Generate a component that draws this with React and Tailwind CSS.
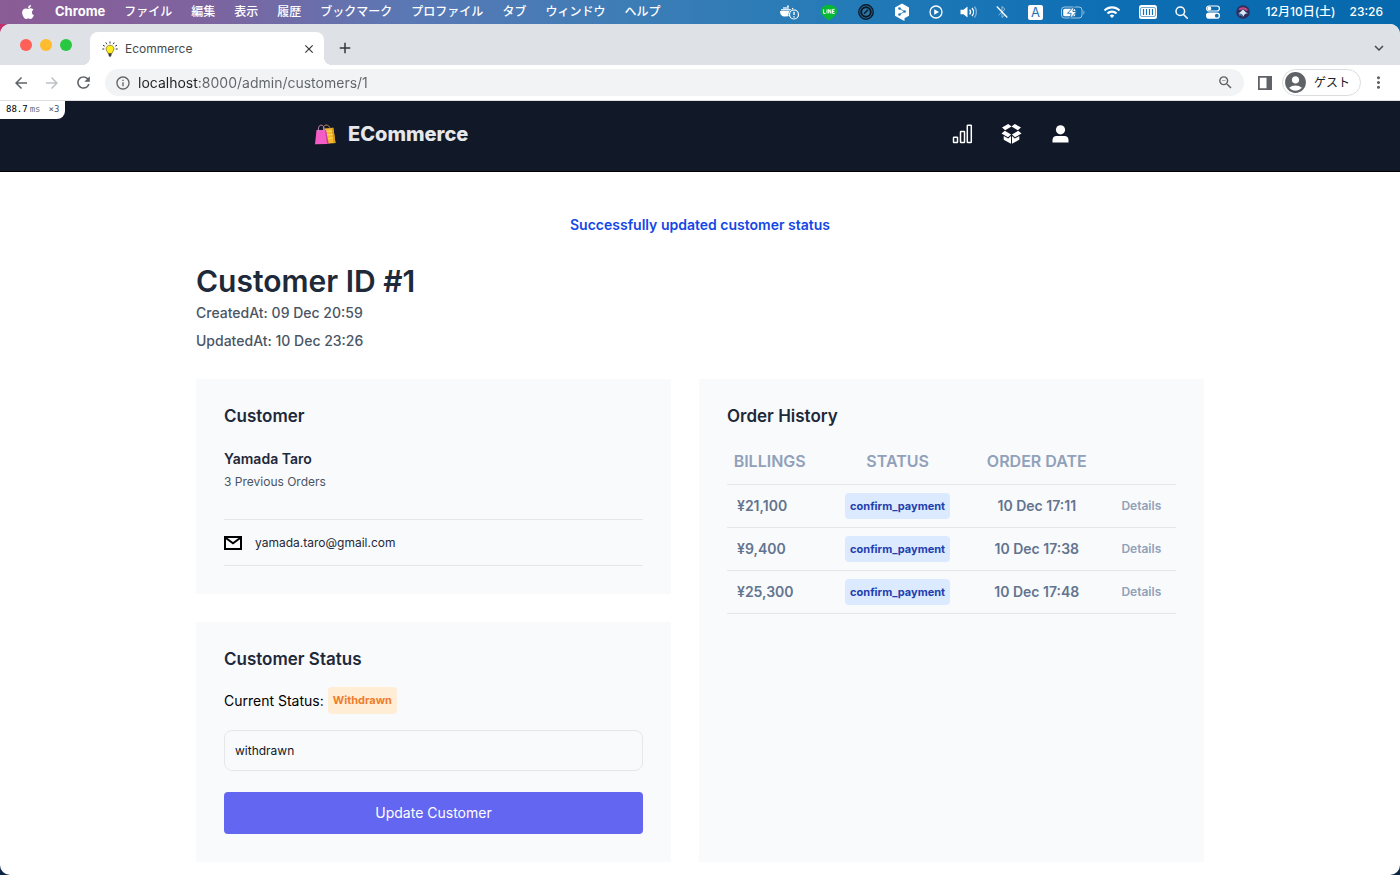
import { useState } from "react";
import { FaApple, FaDocker } from "react-icons/fa";
import {
  MdArrowBack, MdArrowForward, MdRefresh, MdInfoOutline, MdZoomOut,
  MdMoreVert, MdClose, MdAdd, MdKeyboardArrowDown, MdAccountCircle,
  MdWifi
} from "react-icons/md";

const MENUS = [
  "ファイル", "編集", "表示", "履歴", "ブックマーク",
  "プロファイル", "タブ", "ウィンドウ", "ヘルプ",
];

const ORDERS = [
  { id: 1, billing: "¥21,100", status: "confirm_payment", date: "10 Dec 17:11" },
  { id: 2, billing: "¥9,400",  status: "confirm_payment", date: "10 Dec 17:38" },
  { id: 3, billing: "¥25,300", status: "confirm_payment", date: "10 Dec 17:48" },
];

function DockerStatus() {
  return (
    <svg width="20" height="18" viewBox="0 0 20 18">
      <FaDocker x="0" y="0" width="16" height="16" color="#fff" />
      <circle cx="14" cy="11.5" r="5.6" fill="#2a7db8" />
      <circle cx="14" cy="11.5" r="4.5" fill="none" stroke="#fff" strokeWidth="1.2" />
      <path d="M14 8.8v3.2M14 13.2v1.2" stroke="#fff" strokeWidth="1.4" />
    </svg>
  );
}

function LineStatus() {
  return (
    <svg width="18" height="17" viewBox="0 0 18 17">
      <path d="M9 .8c4.6 0 8.3 2.9 8.3 6.6 0 2.7-3.2 5.4-8.3 9C3.9 12.800.7 10.100.7 7.400.7 3.700 4.400.8 9 .8z" fill="#06b833" />
      <path d="M3.600 5.400v4h1.900M7 5.400v4M8.700 9.400v-4l2.200 4v-4M14.600 5.400h-2v4h2M12.600 7.400h1.800" fill="none" stroke="#fff" strokeWidth="1" />
    </svg>
  );
}

function LensStatus() {
  return (
    <svg width="16" height="16" viewBox="0 0 16 16">
      <circle cx="8" cy="8" r="7.2" fill="none" stroke="#0c1a26" strokeWidth="1.4" />
      <circle cx="8" cy="8" r="4.8" fill="#2c76a8" stroke="#0c1a26" strokeWidth="2" />
      <path d="M6 9.800l4-4" stroke="#0c1a26" strokeWidth="1.6" />
    </svg>
  );
}

function HexStatus() {
  return (
    <svg width="16" height="18" viewBox="0 0 16 18">
      <path d="M8 .5l7 4v8.3l-4.5 2.5V18l-3-1.5L1 12.800V4.500z" fill="#fff" />
      <path d="M5.500 5.500l5 3-5 3" fill="none" stroke="#2478b5" strokeWidth=".8" />
      <circle cx="5.5" cy="5.5" r="1.3" fill="#2478b5" />
      <circle cx="10.6" cy="8.5" r="1.3" fill="#2478b5" />
      <circle cx="5.5" cy="11.5" r="1.3" fill="#2478b5" />
    </svg>
  );
}

function PlayStatus() {
  return (
    <svg width="14" height="14" viewBox="0 0 14 14">
      <circle cx="7" cy="7" r="6" fill="none" stroke="#fff" strokeWidth="1.3" />
      <path d="M5.200 4.200L10 7l-4.800 2.800z" fill="#fff" />
    </svg>
  );
}

function VolumeStatus() {
  return (
    <svg width="18" height="14" viewBox="0 0 18 14" fill="none">
      <path d="M.5 4.700h3L7.500 1.500v11L3.500 9.300h-3z" fill="#fff" />
      <path d="M9.700 4.600c1 1.400 1 3.400 0 4.800M12 3c2 2.300 2 5.700 0 8" stroke="#fff" strokeWidth="1.3" />
      <path d="M14.400 1.500c2.700 3.200 2.700 7.800 0 11" stroke="#fff" strokeOpacity=".45" strokeWidth="1.3" />
    </svg>
  );
}

function BluetoothOffStatus() {
  return (
    <svg width="12" height="14" viewBox="0 0 12 14" fill="none" stroke="#fff">
      <path d="M2.500 10.200L9 4.200 6 1.500v11l3-2.700-6.500-6" strokeOpacity=".5" />
      <path d="M.8 1.500l10.500 11" strokeWidth="1.3" />
    </svg>
  );
}

function BatteryStatus() {
  return (
    <svg width="25" height="13" viewBox="0 0 25 13">
      <rect x=".5" y="1" width="20.5" height="11" rx="3" fill="none" stroke="#fff" strokeOpacity=".6" />
      <path d="M22.500 4.500c1.200.3 1.200 3.700 0 4z" fill="#fff" opacity=".6" />
      <rect x="2.2" y="2.7" width="12" height="7.6" rx="1.5" fill="#fff" />
      <path d="M13.200 0L6.500 7.300h3.700L8.800 13l7-7.500h-3.900z" fill="#fff" stroke="#1a73b4" strokeWidth=".9" />
    </svg>
  );
}

function MemoryStatus() {
  return (
    <svg width="18" height="14" viewBox="0 0 18 14">
      <rect width="18" height="14" rx="2.5" fill="#fff" />
      <rect x="1.5" y="2.5" width="15" height="9" rx="1.5" fill="none" stroke="#1a73b4" strokeWidth=".6" />
      <path d="M4.500 4v6M7.500 4v6M10.500 4v6M13.500 4v6" stroke="#1a73b4" strokeWidth="1.2" />
    </svg>
  );
}

function SearchStatus() {
  return (
    <svg width="13" height="13" viewBox="0 0 13 13" fill="none" stroke="#fff" strokeWidth="1.5">
      <circle cx="5.3" cy="5.3" r="4.3" />
      <path d="M8.500 8.500l3.800 3.800" strokeLinecap="round" />
    </svg>
  );
}

function ControlCenterStatus() {
  return (
    <svg width="14" height="14" viewBox="0 0 14 14">
      <rect x=".6" y="1" width="12.8" height="5" rx="2.5" fill="none" stroke="#fff" strokeWidth="1.2" />
      <circle cx="3.4" cy="3.5" r="1.9" fill="#fff" />
      <rect y="7.6" width="14" height="6.2" rx="3.1" fill="#fff" />
      <circle cx="10.8" cy="10.7" r="1.9" fill="#1070b4" />
    </svg>
  );
}

function SiriStatus() {
  return (
    <svg width="14" height="14" viewBox="0 0 14 14">
      <circle cx="7" cy="7" r="6.8" fill="#2f2f5e" />
      <path d="M2.500 4.500C4 1.800 10 1.200 12 5.200c-1.500 1-3 .3-5-1.600-1.500 1.600-3 2-4.500.9z" fill="#c94a86" />
      <path d="M2 8.300c2-.6 3.600-2.300 5-4.100 1.400 1.800 3 3.500 5 4.100-2 .1-3.500.4-4.500 3.200-.7-2.300-3-3-5.500-3.200z" fill="#d9e8f6" />
      <path d="M3 10c1.500-.5 2.600-.5 3.800 1.500" stroke="#4fa5e8" fill="none" />
    </svg>
  );
}

function MenuBar() {
  return (
    <header className="flex h-6 items-center justify-between bg-linear-[90deg,#8b5c96_0%,#7d649f_15%,#5a78b4_29%,#3d7db6_45%,#247bb7_60%,#0d6eb4_80%,#0668ad_100%] pl-5 pr-[17px] text-white">
      <nav className="flex items-center gap-[19px] text-xs font-medium">
        <FaApple size={16} />
        <span className="text-[13px] font-bold">Chrome</span>
        {MENUS.map(m => <span key={m}>{m}</span>)}
      </nav>
      <div className="flex items-center *:flex *:justify-center">
        <span className="w-10"><DockerStatus /></span>
        <span className="w-[38px]"><LineStatus /></span>
        <span className="w-9"><LensStatus /></span>
        <span className="w-9"><HexStatus /></span>
        <span className="w-8"><PlayStatus /></span>
        <span className="w-[34px]"><VolumeStatus /></span>
        <span className="w-8"><BluetoothOffStatus /></span>
        <span className="w-9">
          <span className="h-[15px] w-[15px] rounded-xs bg-white text-center text-[13px] leading-[15px] text-[#1a73b4]">A</span>
        </span>
        <span className="w-10"><BatteryStatus /></span>
        <span className="w-9"><MdWifi size={18} /></span>
        <span className="w-9"><MemoryStatus /></span>
        <span className="w-8"><SearchStatus /></span>
        <span className="w-[30px]"><ControlCenterStatus /></span>
        <span className="w-[30px]"><SiriStatus /></span>
        <time className="gap-3.5 pl-2 text-xs font-medium">
          <span>12月10日(土)</span>
          <span>23:26</span>
        </time>
      </div>
    </header>
  );
}

function Bulb() {
  return (
    <svg width="16" height="16" viewBox="0 0 16 16">
      <path d="M8 4.200c2.300 0 3.900 1.600 3.900 3.600 0 1.900-1.500 2.900-1.900 4.700H6c-.4-1.800-1.900-2.800-1.900-4.700 0-2 1.600-3.600 3.900-3.600z" fill="#ffec1f" stroke="#6d6614" strokeWidth=".7" />
      <path d="M6.300 12.500h3.400l-.5 2.500-1.200 1-1.200-1z" fill="#3a3a3a" />
      <path d="M8 .5v2M3.800 1.500l1 1.700M12.200 1.500l-1 1.700M1 4.200l1.800 1M15 4.200l-1.800 1M.3 8h2M15.700 8h-2" stroke="#333" strokeWidth="1" />
    </svg>
  );
}

function TabStrip() {
  return (
    <div className="flex h-[41px] items-end bg-[#dee1e6] pl-5 pr-3">
      <div className="flex gap-2 self-start pt-[15px]">
        <button aria-label="Close window" className="h-3 w-3 rounded-full bg-[#fe5f57]" />
        <button aria-label="Minimize window" className="h-3 w-3 rounded-full bg-[#febc2e]" />
        <button aria-label="Zoom window" className="h-3 w-3 rounded-full bg-[#28c840]" />
      </div>
      <div className="relative ml-[18px] flex h-[33px] w-[234px] items-center rounded-t-lg bg-white pl-3 pr-2 before:absolute before:-left-2 before:bottom-0 before:h-2 before:w-2 before:bg-[radial-gradient(circle_at_0_0,transparent_8px,white_8px)] after:absolute after:-right-2 after:bottom-0 after:h-2 after:w-2 after:bg-[radial-gradient(circle_at_100%_0,transparent_8px,white_8px)]">
        <Bulb />
        <span className="ml-[7px] flex-1 text-xs text-[#45494d]">Ecommerce</span>
        <button aria-label="Close tab"><MdClose size={14} className="text-[#35363a]" /></button>
      </div>
      <button aria-label="New tab" className="ml-3 mb-2"><MdAdd size={18} className="text-[#35363a]" /></button>
      <button aria-label="Search tabs" className="mb-2 ml-auto"><MdKeyboardArrowDown size={18} className="text-[#45494d]" /></button>
    </div>
  );
}

function Toolbar() {
  return (
    <div className="flex h-9 items-center border-b border-[#dcdee1] bg-white px-3 text-[#5f6368]">
      <button aria-label="Back"><MdArrowBack size={18} /></button>
      <button aria-label="Forward" className="ml-[13px] text-[#bdc1c6]"><MdArrowForward size={18} /></button>
      <button aria-label="Reload" className="ml-[13px]"><MdRefresh size={19} /></button>
      <div className="ml-3 flex h-[27px] flex-1 items-center rounded-full bg-[#f1f3f4] px-2.5">
        <MdInfoOutline size={16} />
        <input
          aria-label="Address"
          defaultValue="localhost:8000/admin/customers/1"
          className="ml-[7px] flex-1 bg-linear-[90deg,#202124_60px,#5f6368_60px] bg-clip-text text-sm text-transparent outline-none"
        />
        <MdZoomOut size={17} />
      </div>
      <button aria-label="Side panel" className="ml-[14px]">
        <svg width="14" height="14" viewBox="0 0 14 14">
          <path d="M0 0h14v14H0zM1.800 1.800v10.400h6.700V1.800z" fill="currentColor" fillRule="evenodd" />
        </svg>
      </button>
      <button className="ml-2.5 flex h-[27px] items-center gap-1.5 rounded-full border border-[#dadce0] pr-2.5 text-xs text-[#202124]">
        <MdAccountCircle size={25} className="text-[#5f6368]" />
        ゲスト
      </button>
      <button aria-label="Menu" className="ml-2"><MdMoreVert size={19} /></button>
    </div>
  );
}

function ShoppingBags() {
  return (
    <svg width="22" height="22" viewBox="0 0 22 22">
      <path d="M10.500 5.500l8.800-.8L21.500 20l-9 .8z" fill="#f2b92b" />
      <path d="M19.300 4.700L21.500 20l-2 .3L17.500 5z" fill="#d99a1c" />
      <path d="M12 8.500l6-.4M12.300 12l6.300-.5M12.700 15.500l6.300-.5" stroke="#fbdc5c" strokeWidth="1" />
      <path d="M9.500 7c-.5-3 .6-5 2.500-5s4 1.400 4.200 4" fill="none" stroke="#b98a4d" strokeWidth="1" />
      <path d="M2.500 7H12l1.500 14-12.500.3z" fill="#f55dc6" />
      <path d="M12 7l2.700 13.500-1.700.6L11 7z" fill="#c93a9d" />
      <path d="M4.500 8.500C4 4.500 5 2.200 7.200 2.200s3.100 2 3.300 5.800" fill="none" stroke="#c78fb8" strokeWidth="1" />
    </svg>
  );
}

function SiteNav() {
  return (
    <div className="relative h-[71px] border-b border-black bg-[#111827] text-white">
      <div className="absolute left-0 top-0 flex h-[18px] items-center rounded-br-lg bg-white px-1.5 font-['DejaVu_Sans_Mono',monospace] text-[9px] text-black">
        88.7<span className="ml-0.5 text-gray-500">ms</span>
        <span className="ml-2 text-gray-600">×3</span>
      </div>
      <div className="mx-auto flex h-[66px] max-w-[772px] items-center justify-between">
        <a href="#home" className="flex items-center gap-3 text-xl font-extrabold text-gray-200">
          <ShoppingBags />
          ECommerce
        </a>
        <div className="flex items-center gap-7 pr-[15px]">
          <a href="#dashboard" aria-label="Dashboard">
            <svg width="21" height="20" viewBox="0 0 21 20" fill="none" stroke="#fff" strokeWidth="1.5">
              <rect x="1.5" y="13.2" width="4" height="5.3" rx=".5" />
              <rect x="8.5" y="7.5" width="4" height="11" rx=".5" />
              <rect x="15.3" y="1.2" width="4" height="17.3" rx=".5" />
            </svg>
          </a>
          <a href="#products" aria-label="Products">
            <svg width="21" height="20" viewBox="0 0 21 20" fill="#fff">
              <path d="M7.200 0l3.300 2.600-6.300 3.700L1 3.600zM13.800 0l-3.300 2.600 6.300 3.700L20 3.600z" />
              <path d="M3.800 6.800l6.300 3.700L7 13.300.5 9.500zM17.200 6.800l-6.300 3.700 3.100 2.800 6.500-3.800z" />
              <path d="M2.700 11.900L7.200 14.600l2.800-2.500v7.700l-7.300-4zM18.300 11.900l-4.500 2.700-2.800-2.500v7.700l7.300-4z" />
            </svg>
          </a>
          <a href="#customers" aria-label="Customers">
            <svg width="21" height="20" viewBox="0 0 21 20" fill="#fff">
              <circle cx="10.5" cy="5.8" r="4.6" />
              <path d="M2.500 18.500v-2.600c0-2.400 1.600-3.900 4-3.900h8c2.400 0 4 1.500 4 3.900v2.600z" />
            </svg>
          </a>
        </div>
      </div>
    </div>
  );
}

function CustomerCard() {
  return (
    <section className="bg-[#f9fafc] p-7">
      <h2 className="text-[17px] leading-[18px] font-semibold text-gray-800">Customer</h2>
      <p className="mt-6 text-sm font-semibold text-gray-800">Yamada Taro</p>
      <p className="mt-[5px] text-xs text-gray-600">3 Previous Orders</p>
      <div className="mt-[29px] flex h-[47px] items-center gap-[13px] border-y border-gray-200">
        <svg width="18" height="14" viewBox="0 0 18 14" fill="none" stroke="#000" strokeWidth="2">
          <path d="M1 1h16v12H1zM1.500 1.800L9 7.300l7.500-5.500" />
        </svg>
        <p className="text-xs text-gray-800">yamada.taro@gmail.com</p>
      </div>
    </section>
  );
}

function StatusCard() {
  const [status, setStatus] = useState("withdrawn");

  return (
    <section className="bg-[#f9fafc] p-7">
      <h2 className="text-[17px] leading-[18px] font-semibold text-gray-800">Customer Status</h2>
      <form onSubmit={e => e.preventDefault()}>
        <p className="mt-[19px] flex items-center gap-1 text-sm text-black">
          <label htmlFor="status">Current Status:</label>
          <span className="rounded-sm bg-[#ffedd5] px-[5px] text-[11px] leading-[27px] font-bold text-[#ee7c2b]">Withdrawn</span>
        </p>
        <input
          id="status"
          value={status}
          onChange={e => setStatus(e.target.value)}
          className="mt-4 h-[41px] w-full rounded-lg border border-gray-200 px-2.5 text-xs text-gray-900 outline-none"
        />
        <button className="mt-[21px] h-[42px] w-full rounded-sm bg-[#6366f1] text-sm text-white">
          Update Customer
        </button>
      </form>
    </section>
  );
}

function OrderHistory() {
  return (
    <section className="bg-[#f9fafc] p-7">
      <h2 className="text-[17px] leading-[18px] font-semibold text-gray-800">Order History</h2>
      <table className="mt-[13px] w-full table-fixed text-center">
        <thead>
          <tr className="h-[46px] border-b border-gray-200 text-base text-slate-400">
            <th className="w-[19%] font-semibold">BILLINGS</th>
            <th className="w-[38%] font-semibold">STATUS</th>
            <th className="w-[24%] font-semibold">ORDER DATE</th>
            <th className="w-[19%]" />
          </tr>
        </thead>
        <tbody>
          {ORDERS.map(o => (
            <tr key={o.id} className="h-[43px] border-b border-gray-200 text-sm font-semibold text-slate-500">
              <td className="pl-2.5 text-left">{o.billing}</td>
              <td>
                <span className="inline-block rounded-sm bg-[#dbeafe] px-[5px] text-[11px] leading-[26px] font-bold text-[#1e40af]">
                  {o.status}
                </span>
              </td>
              <td>{o.date}</td>
              <td className="pl-4 text-xs text-slate-400"><a href={`#orders/${o.id}`}>Details</a></td>
            </tr>
          ))}
        </tbody>
      </table>
    </section>
  );
}

export default function App() {
  return (
    <div className="flex min-h-screen flex-col bg-linear-[90deg,#c0306c,#0668ad] font-[Inter,'Noto_Sans_CJK_JP',sans-serif]">
      <MenuBar />
      <div className="flex flex-1 flex-col bg-linear-[180deg,transparent_50%,#0b2545_50%]">
        <div className="flex flex-1 flex-col overflow-hidden rounded-[10px] bg-white">
          <TabStrip />
          <Toolbar />
          <SiteNav />

          <main className="mx-auto w-full max-w-[1008px] pb-[13px]">
            <p className="mt-[43px] text-center text-sm font-semibold text-blue-700">
              Successfully updated customer status
            </p>
            <h1 className="mt-7 text-3xl leading-9 font-semibold text-gray-800">Customer ID #1</h1>
            <p className="text-sm leading-7 font-medium text-gray-600">CreatedAt: 09 Dec 20:59</p>
            <p className="text-sm leading-7 font-medium text-gray-600">UpdatedAt: 10 Dec 23:26</p>

            <div className="mt-6 grid grid-cols-[475fr_505fr] gap-7">
              <div className="flex flex-col gap-7">
                <CustomerCard />
                <StatusCard />
              </div>
              <OrderHistory />
            </div>
          </main>
        </div>
      </div>
    </div>
  );
}
